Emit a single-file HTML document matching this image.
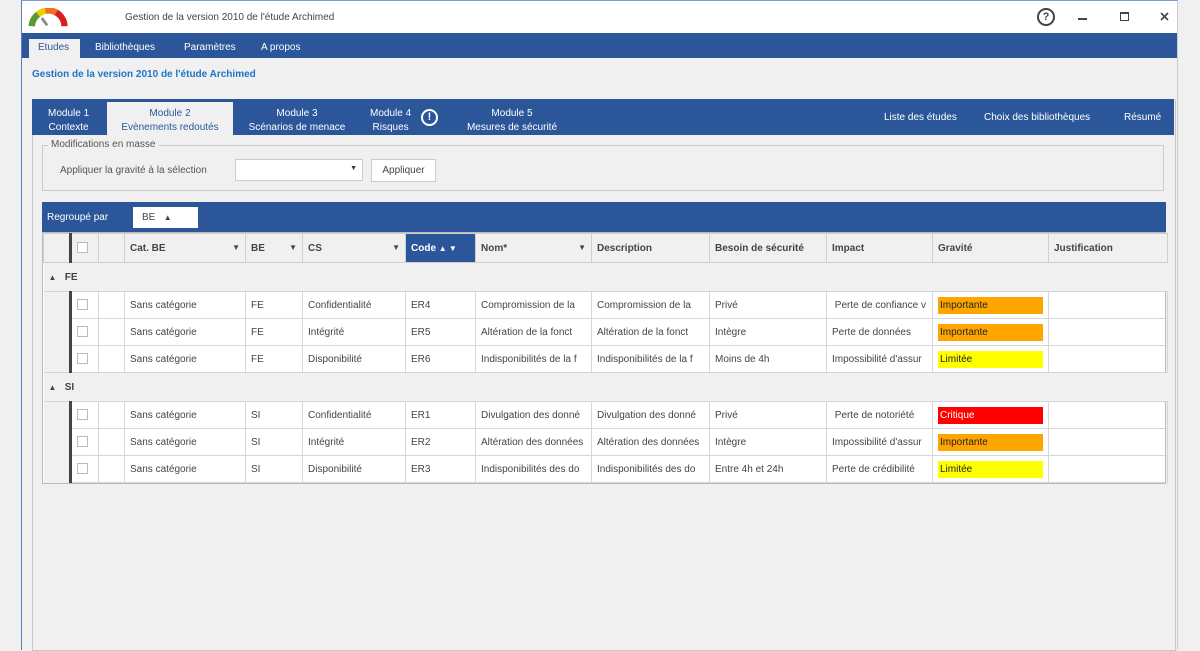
<!DOCTYPE html>
<html><head><meta charset="utf-8"><style>
*{box-sizing:border-box;margin:0;padding:0}
body{width:1200px;height:650px;background:#f0f0f0;font-family:"Liberation Sans",sans-serif;font-size:10px;color:#333;position:relative;overflow:hidden}
.a{position:absolute}
.win{left:21px;top:0;width:1157px;height:650px;background:#f0f0f0;border-left:1px solid #5b7fb5;border-right:1px solid #ccc;border-top:1px solid #7a9cd0}
.tb{left:0;top:0;width:100%;height:32px;background:#fff}
.mb{left:0;top:32px;width:100%;height:25px;background:#2b579a;color:#fff;font-size:10px}
.mb span{position:absolute;top:9px}
.bar{background:#2b579a;color:#fff}
.grid{left:42px;top:232px;width:1124px;border:1px solid #bbb;background:#fff}
table{border-collapse:collapse;table-layout:fixed;width:1124px}
td{border:1px solid #d6d6d6;height:27px;padding:0 5px;white-space:nowrap;overflow:hidden;font-size:10px;color:#444}
tr.h td{background:#f0f0f0;font-weight:bold;height:29px;color:#444;border-color:#cfcfcf}
tr.g td{background:#f0f0f0;height:29px;border-left:none;border-right:none;font-weight:bold}
.cb{display:inline-block;width:11px;height:11px;border:1px solid #bbb;background:#fff;vertical-align:middle}
.ind{border-right:3px solid #444 !important}
.f{float:right;font-size:8px}
.gv{display:block;height:17px;line-height:17px;padding-left:2px;color:#222}
</style></head><body>
<div class="a win">
 <div class="a tb">
  <svg class="a" style="left:6px;top:7px" width="42" height="20" viewBox="0 0 44 22">
   <path d="M3 20 A18 18 0 0 1 10 7" stroke="#5a9a2e" stroke-width="7" fill="none"/>
   <path d="M10 7 A18 18 0 0 1 18 3" stroke="#e8d000" stroke-width="7" fill="none"/>
   <path d="M18 3 A18 18 0 0 1 30 5" stroke="#f07020" stroke-width="7" fill="none"/>
   <path d="M30 5 A18 18 0 0 1 39 20" stroke="#d42020" stroke-width="7" fill="none"/>
   <path d="M14 11 L20 19" stroke="#888" stroke-width="3"/>
  </svg>
  <div class="a" style="left:103px;top:11px;font-size:10px;color:#444">Gestion de la version 2010 de l'étude Archimed</div>
  <div class="a" style="left:1015px;top:7px;width:18px;height:18px;border:2px solid #444;border-radius:50%;text-align:center;font-weight:bold;font-size:11px;line-height:14px;color:#444">?</div>
  <div class="a" style="left:1056px;top:17px;width:9px;height:2px;background:#444"></div>
  <div class="a" style="left:1098px;top:11px;width:9px;height:9px;border:1px solid #444;border-top-width:2px"></div>
  <svg class="a" style="left:1138px;top:11px" width="9" height="9" viewBox="0 0 9 9"><path d="M1 1L8 8M8 1L1 8" stroke="#444" stroke-width="1.6"/></svg>
 </div>
 <div class="a mb">
  <div class="a" style="left:7px;top:6px;width:51px;height:19px;background:#f0f0f0"></div>
  <span style="left:16px;color:#2b579a">Etudes</span>
  <span style="left:73px">Bibliothèques</span>
  <span style="left:162px">Paramètres</span>
  <span style="left:239px">A propos</span>
 </div>
 <div class="a" style="left:10px;top:68px;font-size:10px;font-weight:bold;color:#1e73c8">Gestion de la version 2010 de l'étude Archimed</div>
 <div class="a" style="left:10px;top:98px;width:1144px;height:552px;border:1px solid #c8c8c8;border-top:none"></div>
</div>
<div class="a bar" style="left:32px;top:99px;width:1142px;height:36px;font-size:10px">
 <div class="a" style="left:16px;top:8px;text-align:center;line-height:14px">Module 1<br>Contexte</div>
 <div class="a" style="left:75px;top:3px;width:126px;height:33px;background:#f0f0f0;color:#2b579a;text-align:center;line-height:14px;padding-top:5px">Module 2<br>Evènements redoutés</div>
 <div class="a" style="left:213px;top:8px;text-align:center;line-height:14px;width:104px">Module 3<br>Scénarios de menace</div>
 <div class="a" style="left:338px;top:8px;text-align:center;line-height:14px">Module 4<br>Risques</div>
 <div class="a" style="left:389px;top:10px;width:17px;height:17px;border:2px solid #fff;border-radius:50%;text-align:center;font-weight:bold;font-size:11px;line-height:13px">!</div>
 <div class="a" style="left:430px;top:8px;text-align:center;line-height:14px;width:100px">Module 5<br>Mesures de sécurité</div>
 <div class="a" style="left:852px;top:13px">Liste des études</div>
 <div class="a" style="left:952px;top:13px">Choix des bibliothèques</div>
 <div class="a" style="left:1092px;top:13px">Résumé</div>
</div>
<div class="a" style="left:42px;top:145px;width:1122px;height:46px;border:1px solid #ccc"></div>
<div class="a" style="left:48px;top:139px;background:#f0f0f0;padding:0 3px;font-size:10px;color:#555">Modifications en masse</div>
<div class="a" style="left:60px;top:165px;font-size:10px;color:#555">Appliquer la gravité à la sélection</div>
<div class="a" style="left:235px;top:159px;width:128px;height:22px;border:1px solid #ccc;background:#fff"><span class="a" style="right:5px;top:5px;font-size:7px">▼</span></div>
<div class="a" style="left:371px;top:159px;width:65px;height:23px;border:1px solid #ccc;background:#fff;text-align:center;line-height:21px;font-size:10px;color:#444">Appliquer</div>
<div class="a bar" style="left:42px;top:202px;width:1124px;height:31px">
 <div class="a" style="left:5px;top:10px;font-size:10px">Regroupé par</div>
 <div class="a" style="left:91px;top:5px;width:65px;height:21px;background:#fff;color:#444;font-size:10px;padding:5px 9px">BE &nbsp;&nbsp;<span style="font-size:8px">▲</span></div>
</div>
<div class="a grid">
<table>
<colgroup><col style="width:27px"><col style="width:28px"><col style="width:26px"><col style="width:121px"><col style="width:57px"><col style="width:103px"><col style="width:70px"><col style="width:116px"><col style="width:118px"><col style="width:117px"><col style="width:106px"><col style="width:116px"><col style="width:119px"></colgroup>
<tr class="h"><td class="ind"></td><td><span class="cb"></span></td><td></td><td>Cat. BE<span class="f">▼</span></td><td>BE<span class="f">▼</span></td><td>CS<span class="f">▼</span></td><td style="background:#2b579a;color:#fff">Code <span style="font-size:8px">▲ ▼</span></td><td>Nom*<span class="f">▼</span></td><td>Description</td><td>Besoin de sécurité</td><td>Impact</td><td>Gravité</td><td>Justification</td></tr>
<tr class="g"><td colspan="13"><span style="font-size:8px">▲</span>&nbsp;&nbsp; FE</td></tr>
<tr><td style="background:#f0f0f0;border:none" class="ind"></td><td><span class="cb"></span></td><td></td><td>Sans catégorie</td><td>FE</td><td>Confidentialité</td><td>ER4</td><td>Compromission de la</td><td>Compromission de la</td><td>Privé</td><td>&nbsp;Perte de confiance v</td><td><span class="gv" style="background:#ffa500">Importante</span></td><td></td></tr>
<tr><td style="background:#f0f0f0;border:none" class="ind"></td><td><span class="cb"></span></td><td></td><td>Sans catégorie</td><td>FE</td><td>Intégrité</td><td>ER5</td><td>Altération de la fonct</td><td>Altération de la fonct</td><td>Intègre</td><td>Perte de données</td><td><span class="gv" style="background:#ffa500">Importante</span></td><td></td></tr>
<tr><td style="background:#f0f0f0;border:none" class="ind"></td><td><span class="cb"></span></td><td></td><td>Sans catégorie</td><td>FE</td><td>Disponibilité</td><td>ER6</td><td>Indisponibilités de la f</td><td>Indisponibilités de la f</td><td>Moins de 4h</td><td>Impossibilité d'assur</td><td><span class="gv" style="background:#ffff00">Limitée</span></td><td></td></tr>
<tr class="g"><td colspan="13"><span style="font-size:8px">▲</span>&nbsp;&nbsp; SI</td></tr>
<tr><td style="background:#f0f0f0;border:none" class="ind"></td><td><span class="cb"></span></td><td></td><td>Sans catégorie</td><td>SI</td><td>Confidentialité</td><td>ER1</td><td>Divulgation des donné</td><td>Divulgation des donné</td><td>Privé</td><td>&nbsp;Perte de notoriété</td><td><span class="gv" style="background:#ff0000;color:#fff">Critique</span></td><td></td></tr>
<tr><td style="background:#f0f0f0;border:none" class="ind"></td><td><span class="cb"></span></td><td></td><td>Sans catégorie</td><td>SI</td><td>Intégrité</td><td>ER2</td><td>Altération des données</td><td>Altération des données</td><td>Intègre</td><td>Impossibilité d'assur</td><td><span class="gv" style="background:#ffa500">Importante</span></td><td></td></tr>
<tr><td style="background:#f0f0f0;border:none" class="ind"></td><td><span class="cb"></span></td><td></td><td>Sans catégorie</td><td>SI</td><td>Disponibilité</td><td>ER3</td><td>Indisponibilités des do</td><td>Indisponibilités des do</td><td>Entre 4h et 24h</td><td>Perte de crédibilité</td><td><span class="gv" style="background:#ffff00">Limitée</span></td><td></td></tr>
</table>
</div>
</body></html>
